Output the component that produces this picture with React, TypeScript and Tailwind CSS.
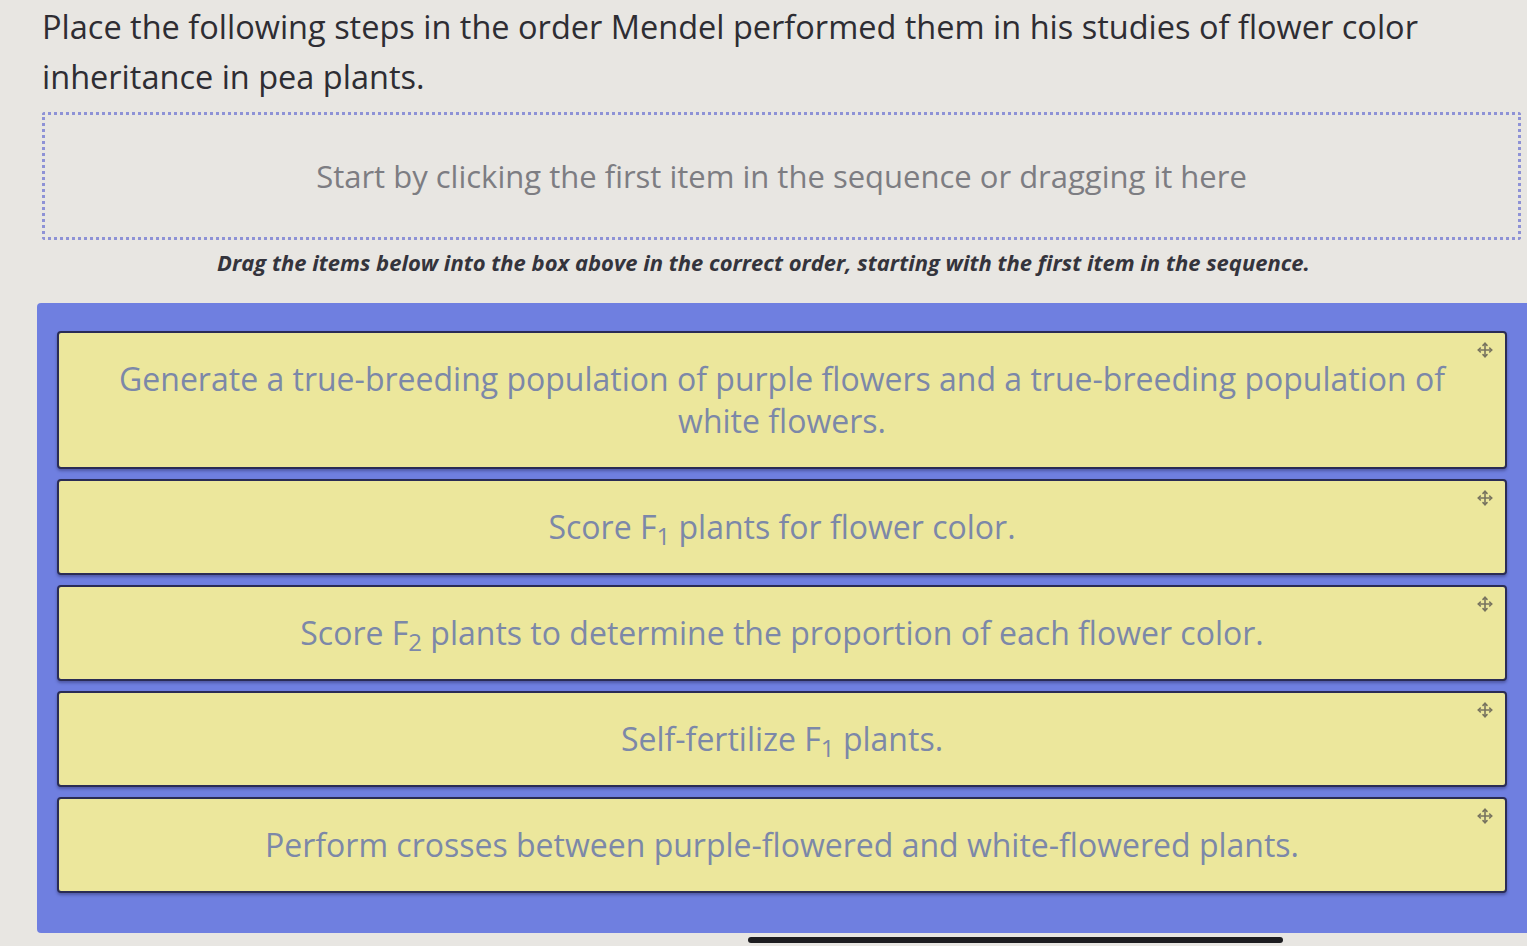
import { Move } from "lucide-react"
import type { ReactNode } from "react"

type Step = { id: string; text: ReactNode }

const F = ({ n }: { n: number }) => (
  <>
    F<sub className="relative top-[0.25em] align-baseline text-[0.75em]">{n}</sub>
  </>
)

const steps: Step[] = [
  {
    id: "generate",
    text: "Generate a true-breeding population of purple flowers and a true-breeding population of white flowers.",
  },
  {
    id: "score-f1",
    text: (
      <>
        Score <F n={1} /> plants for flower color.
      </>
    ),
  },
  {
    id: "score-f2",
    text: (
      <>
        Score <F n={2} /> plants to determine the proportion of each flower color.
      </>
    ),
  },
  {
    id: "self",
    text: (
      <>
        Self-fertilize <F n={1} /> plants.
      </>
    ),
  },
  {
    id: "cross",
    text: "Perform crosses between purple-flowered and white-flowered plants.",
  },
]

function StepCard({ step }: { step: Step }) {
  return (
    <button
      type="button"
      className="relative w-full cursor-move rounded-[4px] border-2 border-[#2a2c55] bg-[#ece79c] px-12 py-[25px] text-center text-[32px] leading-[42px] text-[#7c88a8] shadow-[0_2px_3px_rgba(20,20,60,0.35)]"
    >
      {step.text}
      <Move size={16} strokeWidth={2.4} className="absolute right-[12px] top-[9px] text-[#77735f]" />
    </button>
  )
}

export default function App() {
  return (
    <div
      className="min-h-[946px] bg-[#e8e6e2] pt-[2px]"
      style={{ fontFamily: '"Open Sans", "Liberation Sans", sans-serif' }}
    >
      <div className="px-[42px]">
        <h1 className="text-[32.5px] font-normal leading-[50px] text-[#2e2d33]">
          Place the following steps in the order Mendel performed them in his studies of flower color
          inheritance in pea plants.
        </h1>

        {/* drop zone */}
        <div className="mt-[10px] mr-[-36px] flex h-[128px] items-center justify-center rounded-[3px] border-[3px] border-dotted border-[#8e92d6]">
          <span className="text-[31px] text-[#7d7d82]">
            Start by clicking the first item in the sequence or dragging it here
          </span>
        </div>

        <p className="mt-[6px] text-center text-[22px] font-bold italic text-[#34343c]">
          Drag the items below into the box above in the correct order, starting with the first item in
          the sequence.
        </p>
      </div>

      {/* draggable items */}
      <div className="ml-[37px] mt-[24px] flex flex-col gap-[10px] rounded-l-[4px] bg-[#6f7fe0] pb-[40px] pl-[20px] pr-[20px] pt-[28px]">
        {steps.map((s) => (
          <StepCard key={s.id} step={s} />
        ))}
      </div>

      <div className="flex justify-end pr-[244px] pt-[4px]">
        <div className="h-[6px] w-[535px] rounded-full bg-[#1d1d20]" />
      </div>
    </div>
  )
}
